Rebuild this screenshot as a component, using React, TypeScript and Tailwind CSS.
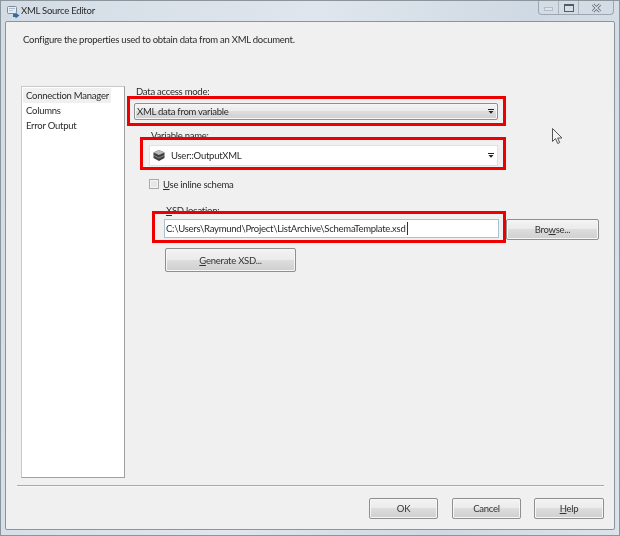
const face =
  'rounded-[2px] border border-[#8e8f8f] bg-[linear-gradient(#f3f3f3_0%,#ebebeb_48%,#dddddd_50%,#cfcfcf_100%)] shadow-[inset_0_0_0_1px_#f6f6f6]';
const btn = `flex items-center justify-center pt-[1px] ${face} text-[#333]`;

function TitleIcon() {
  return (
    <svg width="13" height="13" viewBox="0 0 13 13" className="mt-[2px] shrink-0">
      <rect x=".5" y=".5" width="9" height="7" rx="1" fill="#e8edf2" stroke="#7d8a99" />
      <rect x="2" y="2" width="6" height="1" fill="#a9b8c8" />
      <rect x="2" y="4" width="4" height="1" fill="#bcc8d4" />
      <path d="M6 8h2.500V6.500L12.500 9.500 8.500 12.500V11H6z" fill="#2f6fa8" />
    </svg>
  );
}

function VariableIcon() {
  return (
    <svg width="12" height="13" viewBox="0 0 12 13" className="shrink-0">
      <path d="M6 1 11.500 3.500V9L6 12 .5 9V3.500z" fill="#3f3f3f" />
      <path d="M6 1 11.500 3.500 6 6 .5 3.500z" fill="#b9b9b9" />
      <path d="M1 6.500 6 9l5-2.500" fill="none" stroke="#8a8a8a" />
    </svg>
  );
}

function Arrow() {
  return (
    <svg width="6" height="5" viewBox="0 0 6 5" className="shrink-0">
      <rect x="0" y="0" width="6" height="1" fill="#222" />
      <path d="M.5 2h5L3 4.800z" fill="#222" />
    </svg>
  );
}

function WindowButtons() {
  return (
    <div className="ml-auto mr-[5px] flex h-[14px] w-[76px] rounded-b-[4px] border border-t-0 border-[#9aa7b3] bg-[#d3dce4]">
      <div className="flex w-[20px] items-center justify-center border-r border-[#aab5c0]">
        <div className="mt-[3px] h-[4px] w-[9px] border border-[#b4bcc4] bg-[#dfe4e9]" />
      </div>
      <div className="flex w-[20px] items-center justify-center border-r border-[#aab5c0]">
        <div className="h-[8px] w-[10px] border border-t-2 border-[#4f5b68] bg-[#d7dde3]" />
      </div>
      <div className="flex flex-1 items-center justify-center">
        <svg width="11" height="10" viewBox="0 0 11 10">
          <path d="M2 1.500l7 7M9 1.500l-7 7" stroke="#5c6773" strokeWidth="3" />
          <path d="M2 1.500l7 7M9 1.500l-7 7" stroke="#dfe4e9" strokeWidth="1.300" />
        </svg>
      </div>
    </div>
  );
}

export default function App() {
  return (
    <div className="relative h-[536px] w-[620px] overflow-hidden border-x border-b border-[#8c949c] bg-[linear-gradient(100deg,#d3dce5_0%,#dfe6ed_45%,#cfd9e3_75%,#dbe3ea_100%)] font-['Lato','Open_Sans',sans-serif] text-[9.5px] leading-[14px] tracking-[-0.25px] text-[#2a2a2a] blur-[0.4px]">
      {/* title bar */}
      <div className="flex h-[21px] items-start border-t border-[#8c949c]">
        <div className="flex items-start gap-[1px] pl-[6px] pt-[3px]">
          <TitleIcon />
          <span>XML Source Editor</span>
        </div>
        <WindowButtons />
      </div>

      {/* client area */}
      <div className="mx-[4px] h-[509px] rounded-[2px] border border-[#8b939b] bg-[#f0f0f0]">
        <p className="ml-[17px] mt-[11px]">Configure the properties used to obtain data from an XML document.</p>

        <div className="ml-[15px] mt-[38px] flex h-[393px]">
          <div className="mt-[1px] h-[392px] w-[104px] border border-[#a0a0a0] border-l-[#c8c8c8] border-t-[#c8c8c8] bg-white p-[1px]">
            <div className="h-[15px] w-[88px] whitespace-nowrap bg-[#f0f0f0] pl-[3px] pt-[1px]">Connection Manager</div>
            <div className="h-[15px] pl-[3px] pt-[1px]">Columns</div>
            <div className="h-[15px] pl-[3px] pt-[1px]">Error Output</div>
          </div>

          {/* right side */}
          <div className="ml-[2px] flex flex-col">
            <div className="ml-[9px] mt-0 h-[14px]">
              Data <span className="underline">a</span>ccess mode:
            </div>
            <div className="relative mt-[-3px] box-border flex h-[30px] w-[379px] items-center border-[3px] border-[#ee0000] pl-[4px] pr-[5px]">
              <div className={`${face} flex h-[17px] w-full items-center justify-between pl-[2px] pr-[3px]`}>
                <span className="pt-[1px]">XML data from variable</span>
                <Arrow />
              </div>
            </div>

            <div className="ml-[24px] mt-[3px] h-[14px]">Variable name:</div>
            <div className="relative ml-[13px] mt-[-6px] box-border flex h-[33px] w-[366px] items-center border-[3px] border-[#ee0000] pl-[6px] pr-[5px] pt-[4px]">
              <div className="flex h-[21px] w-full items-center border border-[#e2e2e2] bg-white pl-[3px] pr-[3px]">
                <VariableIcon />
                <span className="ml-[6px] pt-[1px]">User::OutputXML</span>
                <span className="ml-auto">
                  <Arrow />
                </span>
              </div>
            </div>

            <div className="ml-[22px] mt-[9px] flex h-[10px] items-center">
              <div className="h-[10px] w-[10px] border border-[#a8a8a8] bg-[#e6e6e6] shadow-[inset_0_0_0_1px_#f4f4f4]" />
              <span className="ml-[4px] pt-[1px]">
                <span className="underline">U</span>se inline schema
              </span>
            </div>

            <div className="ml-[39px] mt-[15px] h-[14px]">
              <span className="underline">X</span>SD location:
            </div>
            <div className="mt-[-7px] flex h-[32px] items-start">
              <div className="relative ml-[25px] box-border flex h-[32px] w-[354px] items-center border-[3px] border-[#ee0000] pl-[9px] pr-[4px] pt-[3px]">
                <div className="flex h-[19px] w-full items-center border border-[#abc1d2] bg-white pl-[1px]">
                  C:\Users\Raymund\Project\ListArchive\SchemaTemplate.xsd
                  <span className="ml-[1px] h-[13px] w-[1px] bg-[#333]" />
                </div>
              </div>
              <div className={`${btn} mt-[8px] h-[21px] w-[93px]`}>
                <span>
                  Bro<span className="underline">w</span>se...
                </span>
              </div>
            </div>

            <div className={`${btn} ml-[38px] mt-[5px] h-[24px] w-[131px]`}>
              <span>
                <span className="underline">G</span>enerate XSD...
              </span>
            </div>
          </div>
        </div>

        <div className="ml-[11px] mt-[7px] h-[1px] w-[587px] bg-[#a9a9a9] shadow-[0_1px_0_#f8f8f8]" />

        <div className="mt-[12px] flex pl-[363px]">
          <div className={`${btn} h-[21px] w-[69px] border-[#4f9fc4] shadow-[inset_0_0_0_1px_#c4e8f5]`}>OK</div>
          <div className={`${btn} ml-[14px] h-[21px] w-[69px]`}>Cancel</div>
          <div className={`${btn} ml-[13px] h-[21px] w-[70px]`}>
            <span>
              <span className="underline">H</span>elp
            </span>
          </div>
        </div>
      </div>

      {/* mouse pointer over the dialog */}
      <svg width="11" height="17" viewBox="0 0 11 17" className="absolute left-[551px] top-[128px]">
        <path d="M.5.5v13l3-3 2.200 5 2-1-2-4.500h4.300z" fill="#f4f4f4" stroke="#555" />
      </svg>
    </div>
  );
}
